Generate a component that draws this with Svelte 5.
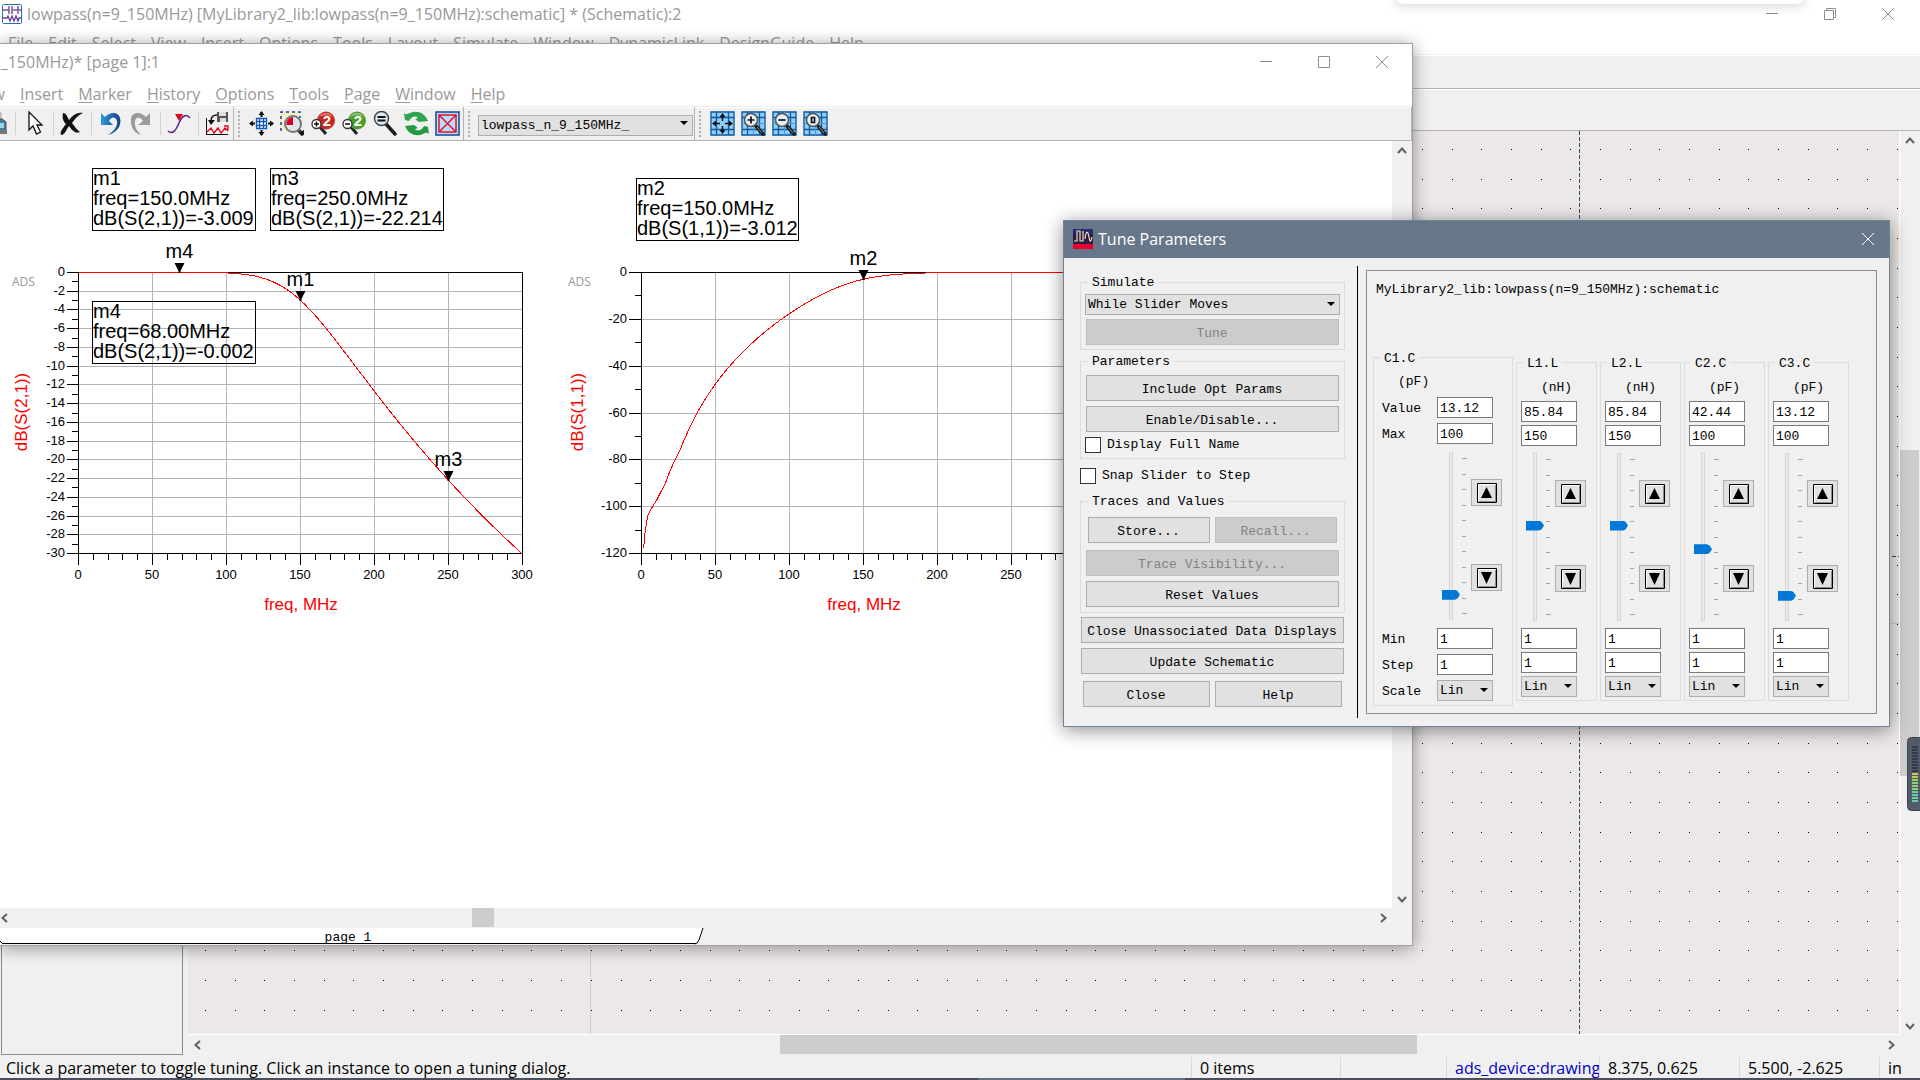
<script lang="ts">
	interface Marker {
		name: string;
		freq: number;
		db: number;
	}
	interface Plot {
		left: number;
		labelX: number;
		titleX: number;
		adsX: number;
		tickX: number;
		minorX: number;
		min: number;
		major: number;
		minor: number;
		trace: string;
		points: [number, number][];
		markers: Marker[];
	}
	interface Param {
		name: string;
		unit: string;
		value: number;
		max: number;
	}

	const schematicMenus = [
		'File', 'Edit', 'Select', 'View', 'Insert', 'Options', 'Tools', 'Layout',
		'Simulate', 'Window', 'DynamicLink', 'DesignGuide', 'Help'
	];
	const displayMenus = ['Insert', 'Marker', 'History', 'Options', 'Tools', 'Page', 'Window', 'Help'];

	let params = $state<Param[]>([
		{ name: 'C1.C', unit: 'pF', value: 13.12, max: 100 },
		{ name: 'L1.L', unit: 'nH', value: 85.84, max: 150 },
		{ name: 'L2.L', unit: 'nH', value: 85.84, max: 150 },
		{ name: 'C2.C', unit: 'pF', value: 42.44, max: 100 },
		{ name: 'C3.C', unit: 'pF', value: 13.12, max: 100 }
	]);

	// Schematic grid, snapped to whole pixels so the dots stay crisp.
	const PITCH = 29.68;
	let dots = '';
	for (let r = 0; r < 60; r++) {
		for (let c = 0; c < 100; c++) {
			dots += `M${Math.round(17 + c * PITCH)} ${Math.round(18 + r * PITCH)}h1v1h-1z`;
		}
	}

	// Both plots share the vertical extent and a 0-300 MHz axis.
	const TOP = 131;
	const HEIGHT = 281;
	const WIDTH = 444;
	const CUTOFF = 150;

	const s21: [number, number][] = [];
	for (let f = 0; f <= 300; f += 2) {
		s21.push([f, -10 * Math.log10(1 + (f / CUTOFF) ** 10)]);
	}
	const s11: [number, number][] = [
		[1.5, -118], [2, -113], [3, -108.5], [4.2, -104], [6, -101.7], [8, -99.6],
		[10.2, -97.4], [13, -93.9], [16, -90.3], [18.6, -86], [22.3, -80.5]
	];
	for (let f = 26; f <= 300; f += 2) {
		s11.push([f, -10 * Math.log10(1 + (CUTOFF / f) ** 10)]);
	}

	const plots: Plot[] = [
		{
			left: 78, labelX: 65, titleX: 27, adsX: 12, tickX: 67, minorX: 72,
			min: -30, major: 2, minor: 1, trace: 'dB(S(2,1))', points: s21,
			markers: [
				{ name: 'm4', freq: 68, db: -0.002 },
				{ name: 'm1', freq: 150, db: -3.009 },
				{ name: 'm3', freq: 250, db: -22.214 }
			]
		},
		{
			left: 641, labelX: 627, titleX: 583, adsX: 568, tickX: 629, minorX: 635,
			min: -120, major: 20, minor: 10, trace: 'dB(S(1,1))', points: s11,
			markers: [{ name: 'm2', freq: 150, db: -3.012 }]
		}
	];

	const readouts = [
		{ x: 92, y: 27, w: 163, lines: ['m1', 'freq=150.0MHz', 'dB(S(2,1))=-3.009'] },
		{ x: 270, y: 27, w: 173, lines: ['m3', 'freq=250.0MHz', 'dB(S(2,1))=-22.214'] },
		{ x: 92, y: 160, w: 163, lines: ['m4', 'freq=68.00MHz', 'dB(S(2,1))=-0.002'] },
		{ x: 636, y: 37, w: 162, lines: ['m2', 'freq=150.0MHz', 'dB(S(1,1))=-3.012'] }
	];

	const px = (p: Plot, f: number) => p.left + (f / 300) * WIDTH;
	const py = (p: Plot, db: number) => TOP + (db / p.min) * HEIGHT;
	const snap = (n: number) => Math.round(n) + 0.5;
	const range = (end: number, step: number) =>
		Array.from({ length: Math.round(end / step) + 1 }, (_, i) => i * step);
	const tracePath = (p: Plot) =>
		p.points.map(([f, d]) => `${(px(p, f) + 0.5).toFixed(1)},${(py(p, d) + 0.2).toFixed(1)}`).join(' ');

	function nudge(p: Param, by: number) {
		p.value = Math.min(p.max, Math.max(1, +(p.value + by).toFixed(2)));
	}
</script>

{#snippet chevron(dir: string)}
	<svg class="chev {dir}" viewBox="0 0 10 10" width="10" height="10">
		<path d="M1 7 5 2.500 9 7" fill="none" stroke="#606060" stroke-width="2" />
	</svg>
{/snippet}

{#snippet scrollbar(dir: string, start: number, size: number)}
	<div class="scroll {dir}">
		<button type="button" aria-label="Scroll back">{@render chevron(dir === 'v' ? 'up' : 'left')}</button>
		<div class="track">
			{#if size > 0}
				<div
					class="thumb"
					style={dir === 'v' ? `top:${start}%;height:${size}%` : `left:${start}%;width:${size}%`}
				></div>
			{/if}
		</div>
		<button type="button" aria-label="Scroll forward">{@render chevron(dir === 'v' ? 'down' : 'right')}</button>
	</div>
{/snippet}

{#snippet lens()}
	<path d="m15 15 7 8" stroke="#1c1c1c" stroke-width="3.500" stroke-linecap="round" />
	<path d="m16 16 5 6" stroke="#888" stroke-width="1" />
{/snippet}

{#snippet gridTile()}
	<rect x=".5" y=".5" width="24" height="24" fill="#8ecdf7" />
	<path d="M1 1h23v23H1zM6.500 1v23M18.500 1v23M1 6.500h23M1 18.500h23" fill="none" stroke="#12589f" stroke-width="1.300" />
	<path d="M12.500 1v23M1 12.500h23" fill="none" stroke="#4d97d3" />
{/snippet}

<div class="desktop">
	<header class="title">
		<svg class="appicon" viewBox="0 0 20 20" width="20" height="20">
			<rect x=".5" y=".5" width="19" height="19" rx="1" fill="#fff" stroke="#2b6cb5" />
			<path d="M1 6h6M7 2v8M10 2v8M10 6h9M16 2v8" fill="none" stroke="#7d5a9e" stroke-width="1.500" />
			<path d="M1 14h4l1-2 2 5 2-5 2 5 2-5 2 5 1-3h2" fill="none" stroke="#6a3d98" stroke-width="1.300" />
		</svg>
		<span>lowpass(n=9_150MHz) [MyLibrary2_lib:lowpass(n=9_150MHz):schematic] * (Schematic):2</span>
		<div class="sysbtns">
			<button type="button" aria-label="Minimize">
				<svg viewBox="0 0 12 12" width="12" height="12"><path d="M0 5.500h12" /></svg>
			</button>
			<button type="button" aria-label="Restore">
				<svg viewBox="0 0 12 12" width="12" height="12"><path d="M.5 2.500h9v9h-9zM2.500 2.500v-2h9v9h-2" /></svg>
			</button>
			<button type="button" aria-label="Close">
				<svg viewBox="0 0 12 12" width="12" height="12"><path d="m0 0 12 12M12 0 0 12" /></svg>
			</button>
		</div>
	</header>
	<nav class="menubar main" aria-label="Schematic menu">
		{#each schematicMenus as m}
			<button type="button">{m}</button>
		{/each}
	</nav>
	<div class="strip first"></div>
	<div class="strip second"></div>

	<main class="body">
		<div class="side"><div class="panel"></div></div>
		<div class="schematic">
			<svg class="sheet" aria-hidden="true">
				<path d="M402.500 0v2000M0 492.500h4000" stroke="#cfcfd1" />
				<path d={dots} fill="#000" />
				<path d="M1391.500 0v2000M0 425.500h4000" stroke="#2f4f4f" stroke-dasharray="4 2" />
			</svg>
			{@render scrollbar('v', 34.6, 37.7)}
			{@render scrollbar('h', 34.2, 38.1)}
		</div>
	</main>

	<footer class="status">
		<span class="msg">Click a parameter to toggle tuning. Click an instance to open a tuning dialog.</span>
		<span class="cell items">0 items</span>
		<span class="cell blank"></span>
		<span class="cell layer">ads_device:drawing</span>
		<span class="cell pos">8.375, 0.625</span>
		<span class="cell pos">5.500, -2.625</span>
		<span class="cell unit">in</span>
	</footer>
	<div class="taskbar"></div>

	<div class="flyout"></div>
	<svg class="meter" viewBox="0 0 13 74" width="13" height="74" aria-hidden="true">
		<rect x=".5" y=".5" width="18" height="73" rx="4" fill="#535b6b" stroke="#3d4350" />
		{#each range(18, 1) as i}
			<rect
				x="5" y={9 + i * 3} width="6" height="2"
				fill={i < 9 ? '#343946' : i < 11 ? '#c9c94f' : i < 15 ? '#92d06c' : '#66cfa6'}
			/>
		{/each}
	</svg>

	<section class="window" aria-label="Data display">
		<header class="wtitle">
			<span class="wname"><span>9_150MHz)* [page 1]:1</span></span>
			<div class="sysbtns">
				<button type="button" aria-label="Minimize">
					<svg viewBox="0 0 12 12" width="12" height="12"><path d="M0 5.500h12" /></svg>
				</button>
				<button type="button" aria-label="Maximize">
					<svg viewBox="0 0 12 12" width="12" height="12"><path d="M.5.5h11v11H.5z" /></svg>
				</button>
				<button type="button" aria-label="Close">
					<svg viewBox="0 0 12 12" width="12" height="12"><path d="m0 0 12 12M12 0 0 12" /></svg>
				</button>
			</div>
		</header>
		<nav class="menubar" aria-label="Display menu">
			<button type="button" class="cut">w</button>
			{#each displayMenus as m}
				<button type="button"><u>{m[0]}</u>{m.slice(1)}</button>
			{/each}
		</nav>

		<div class="toolbar">
			<div class="group">
				<button type="button" class="half" aria-label="Print">
					<svg viewBox="16 0 9 25" width="9" height="25">
						<path d="M10 2h7v9h-7z" fill="#e8eef4" stroke="#999" />
						<path d="M8 8h10l4 3v10H8z" fill="#3f7fa6" stroke="#444" />
						<path d="M14 12h6v5h-6z" fill="#9fd0ea" /><path d="M14 19h9v4h-9z" fill="#777" />
					</svg>
				</button>
				<i class="sep"></i>
				<button type="button" aria-label="Select">
					<svg viewBox="0 0 25 25"><path d="M7 1v18l4-4 3.500 8 4-2-3.500-7h5z" fill="#fff" stroke="#111" stroke-width="1.300" /></svg>
				</button>
				<i class="sep"></i>
				<button type="button" aria-label="Delete">
					<svg viewBox="0 0 25 25"><path d="M3 2c3 0 4 3 6 7 4-5 8-8 14-7-5 2-8 6-11 10 3 4 5 7 8 9-5 2-8-2-11-6-3 4-3 7-7 9-3-1-1-5 4-11-3-3-4-6-3-11z" fill="#111" /></svg>
				</button>
				<i class="sep"></i>
				<button type="button" aria-label="Undo">
					<svg viewBox="0 0 25 25">
						<defs><linearGradient id="blue" x1="0" x2="1"><stop offset="0" stop-color="#2b9be0" /><stop offset="1" stop-color="#173f88" /></linearGradient></defs>
						<path d="M3 2v12h12l-4-4c3-5 7-4 8 0 1 5-3 10-9 14 9-2 14-10 12-17C20 0 12 1 7 6z" fill="url(#blue)" />
					</svg>
				</button>
				<button type="button" aria-label="Redo">
					<svg viewBox="0 0 25 25"><path d="M21 2v12H9l5-4c-4-5-7-4-8 0-1 5 2 10 6 14C4 22 1 14 2 7 4 0 12 1 17 6z" fill="#9b9b9b" /></svg>
				</button>
				<i class="sep"></i>
				<button type="button" aria-label="Insert marker">
					<svg viewBox="0 0 25 25">
						<path d="M1 20c5 4 8-1 11-8S19 2 23 7" fill="none" stroke="#5c2382" stroke-width="1.500" />
						<path d="M8 3h8l-4 7z" fill="#e3001f" />
					</svg>
				</button>
				<i class="sep"></i>
				<button type="button" aria-label="Save trace">
					<svg viewBox="0 0 25 25">
						<path d="M1.500 7v17M1 23.500h22" fill="none" stroke="#111" />
						<path d="m2 21 4-4 3 5 4-5 3 5 4-5 3 3M19 15h4v4" fill="none" stroke="#e3001f" stroke-width="1.300" />
						<rect x="12" y="1" width="11" height="10" fill="#555" /><path d="M14 1h7v4h-7zM15 7h6v4h-6z" fill="#ddd" />
						<path d="M12 4C8 4 6 6 6 10" fill="none" stroke="#111" stroke-width="1.500" /><path d="M3 9h7l-4 5z" fill="#111" />
					</svg>
				</button>
			</div>
			<div class="group">
				<i class="grip"></i>
				<button type="button" aria-label="View all">
					<svg viewBox="0 0 25 25">
						<path d="M12.500 1v23M1 12.500h23" stroke="#111" stroke-width="2" />
						<path d="m12.500 0 3 4h-6zm0 25 3-4h-6zM0 12.500l4-3v6zm25 0-4-3v6z" fill="#111" />
						<rect x="6" y="6" width="13" height="13" fill="#efefef" />
						<path d="M7.500 7.500h10v10h-10zM10.500 7v11M14.500 7v11M7 10.500h11M7 14.500h11" fill="#fff" stroke="#1158b8" stroke-width="1.300" />
					</svg>
				</button>
				<button type="button" aria-label="Zoom area">
					<svg viewBox="0 0 25 25">
						<rect x="1" y="1" width="19" height="19" fill="#eef3c8" />
						<path d="M1 20V1h19v6" fill="none" stroke="#1b3c9a" stroke-width="1.500" stroke-dasharray="3 3" />
						{@render lens()}
						<circle cx="13" cy="13" r="8" fill="#dfe5ec" stroke="#777" stroke-width="2" />
						<path d="M13 6v8H6.500c-.5-4 2-8 6.500-8z" fill="#e3001f" /><path d="m19 22 5 2v-5z" fill="#111" />
					</svg>
				</button>
				{#each ['#c8281e', '#4d9e2d'] as tint, i}
					<button type="button" aria-label={i === 0 ? 'Zoom in by 2' : 'Zoom out by 2'}>
						<svg viewBox="0 0 25 25">
							<path d="m9 16 6 7" stroke="#222" stroke-width="3" />
							<circle cx="15" cy="9.500" r="9" fill={tint} />
							<path d="M7.500 6c4-6 11-5 15 0-4-2-11-2-15 0z" fill="#fff" opacity=".35" />
							<text x="16" y="15" class="two" text-anchor="middle">2</text>
							<circle cx="5.500" cy="13" r="4.500" fill="#fff" stroke="#333" stroke-width="1.300" />
							<path d={i === 0 ? 'M3 13h5M5.500 10.500v5' : 'M3 13h5'} stroke="#111" stroke-width="1.500" />
						</svg>
					</button>
				{/each}
				<button type="button" aria-label="Actual size">
					<svg viewBox="0 0 25 25">
						<path d="m13 13 9 10" stroke="#1c1c1c" stroke-width="3.500" stroke-linecap="round" />
						<circle cx="8.500" cy="7.500" r="7" fill="#dceaf5" stroke="#444" stroke-width="1.500" />
						<path d="M4.500 6h8M4.500 9.500h8" stroke="#111" stroke-width="2" />
					</svg>
				</button>
				<button type="button" aria-label="Refresh">
					<svg viewBox="0 0 25 25">
						<path d="M0 2c2 2 3 1 6 0 7-3 14 0 17 6l1 2-9 1-4-3 3-1C11 4 7 6 5 10L1 9z" fill="#2fa34f" />
						<path d="M25 23c-2-2-3-1-6 0-7 3-14 0-17-6l-1-2 9-1 4 3-3 1c3 3 7 1 9-3l4 1z" fill="#249a44" />
					</svg>
				</button>
				<button type="button" aria-label="Clear">
					<svg viewBox="0 0 25 25">
						<rect x="1" y="1" width="23" height="23" fill="#b5dcf8" stroke="#0f4a94" stroke-width="1.500" />
						<path d="M4 4h17v17H4zl17 17M21 4 4 21" fill="none" stroke="#e8112d" stroke-width="1.500" />
					</svg>
				</button>
			</div>
			<div class="group">
				<i class="grip"></i>
				<span class="combo dataset">
					<select aria-label="Dataset"><option>lowpass_n_9_150MHz_</option></select>
				</span>
			</div>
			<div class="group last">
				<i class="grip"></i>
				<button type="button" aria-label="Autoscale">
					<svg viewBox="0 0 25 25">
						{@render gridTile()}
						<path d="M12.500 4v17M4 12.500h17" stroke="#111" stroke-width="1.500" />
						<path d="m12.500 2 3 4h-6zm0 21 3-4h-6zM2 12.500l4-3v6zm21 0-4-3v6z" fill="#111" />
						<rect x="10" y="10" width="5" height="5" fill="#8ecdf7" />
					</svg>
				</button>
				{#each ['M6.500 9h7M10 5.500v7', 'M6.500 9h7', 'M8.500 6.500h3v5h-3z'] as mark, i}
					<button type="button" aria-label={['Zoom in plot', 'Zoom out plot', 'Reset plot'][i]}>
						<svg viewBox="0 0 25 25">
							{@render gridTile()}
							{@render lens()}
							<circle cx="10" cy="9" r="6.500" fill="#e4eff7" stroke="#555" stroke-width="1.500" />
							<path d={mark} fill="none" stroke="#111" stroke-width="1.700" />
						</svg>
					</button>
				{/each}
			</div>
		</div>

		<div class="page">
			<div class="paper">
				<svg class="plots" width="1392" height="767">
					{#each plots as p}
						<g class="crisp">
							{#each range(250, 50).slice(1) as f}
								<path class="grid" d="M{snap(px(p, f))} {TOP}v{HEIGHT}" />
							{/each}
							{#each range(-p.min, p.major).slice(1, -1) as d}
								<path class="grid" d="M{p.left} {snap(py(p, -d))}h{WIDTH}" />
							{/each}
							{#each range(300, 10) as f}
								<path class="axis" d="M{snap(px(p, f))} {TOP + HEIGHT}v{f % 50 ? 7 : 12}" />
							{/each}
							{#each range(-p.min, p.minor) as d}
								<path class="axis" d="M{d % p.major ? p.minorX : p.tickX} {snap(py(p, -d))}H{p.left}" />
							{/each}
							<rect class="axis" x={p.left + 0.5} y={TOP + 0.5} width={WIDTH} height={HEIGHT} />
							<polyline class="trace" points={tracePath(p)} />
						</g>
						{#each range(-p.min, p.major) as d}
							<text class="tick" x={p.labelX} y={Math.round(py(p, -d)) + 4} text-anchor="end">{d ? -d : 0}</text>
						{/each}
						{#each range(300, 50) as f}
							<text class="tick" x={px(p, f)} y="438" text-anchor="middle">{f}</text>
						{/each}
						<text class="ads" x={p.adsX} y="145">ADS</text>
						<text class="label" transform="translate({p.titleX} 271) rotate(-90)" text-anchor="middle">{p.trace}</text>
						<text class="label" x={p.left + 1 + WIDTH / 2} y="469" text-anchor="middle">freq, MHz</text>
						{#each p.markers as m}
							{@const x = Math.round(px(p, m.freq)) + 0.5}
							{@const y = Math.round(py(p, m.db)) + 1}
							<path d="M{x - 5} {y - 10}h10l-4 8v2h-2v-2z" fill="#000" />
							<text class="mark" {x} y={y - 15} text-anchor="middle">{m.name}</text>
						{/each}
					{/each}
					{#each readouts as r}
						<rect class="axis" x={r.x + 0.5} y={r.y + 0.5} width={r.w} height="62" />
						{#each r.lines as line, i}
							<text class="mark" x={r.x + 1} y={r.y + 17 + i * 20}>{line}</text>
						{/each}
					{/each}
				</svg>
			</div>
			{@render scrollbar('v', 0, 0)}
		</div>
		<div class="hscroll">{@render scrollbar('h', 33.7, 1.6)}</div>
		<div class="tabs">
			<button type="button" class="tab">
				<svg viewBox="0 0 704 17" width="704" height="17" aria-hidden="true">
					<path d="M0 0h703l-4 12q-1 4-5 4H4q-2-1-4-3z" fill="#fff" />
					<path d="M703 0l-4 12q-1 4-5 4M0 13l3 3M3 15.500h692" fill="none" stroke="#000" />
				</svg>
				<span>page 1</span>
			</button>
		</div>
	</section>

	<section class="dialog" role="dialog" aria-label="Tune Parameters">
		<header class="dtitle">
			<svg viewBox="0 0 20 20" width="20" height="20">
				<rect width="20" height="15" fill="#2c1c40" /><path d="M0 0h20v5H0z" fill="#27307a" opacity=".8" />
				<rect y="15" width="20" height="5" fill="#e9002a" />
				<path d="M1 12h3V2h3v10h3V2M12 10c1-9 3-8 4-2s2 5 3 0" fill="none" stroke="#f5dcc0" stroke-width="1.200" />
			</svg>
			<span>Tune Parameters</span>
			<button type="button" aria-label="Close">
				<svg viewBox="0 0 12 12" width="12" height="12"><path d="m0 0 12 12M12 0 0 12" stroke="#fff" /></svg>
			</button>
		</header>
		<div class="dbody">
			<div class="controls">
				<fieldset class="simulate">
					<legend>Simulate</legend>
					<span class="combo wide">
						<select aria-label="Simulate mode"><option>While Slider Moves</option></select>
					</span>
					<button type="button" class="btn" disabled>Tune</button>
				</fieldset>
				<fieldset class="parameters">
					<legend>Parameters</legend>
					<button type="button" class="btn">Include Opt Params</button>
					<button type="button" class="btn">Enable/Disable...</button>
					<label class="check"><input type="checkbox" />Display Full Name</label>
				</fieldset>
				<label class="check snap"><input type="checkbox" />Snap Slider to Step</label>
				<fieldset class="traces">
					<legend>Traces and Values</legend>
					<div class="pair">
						<button type="button" class="btn">Store...</button>
						<button type="button" class="btn" disabled>Recall...</button>
					</div>
					<button type="button" class="btn" disabled>Trace Visibility...</button>
					<button type="button" class="btn">Reset Values</button>
				</fieldset>
				<div class="actions">
					<button type="button" class="btn">Close Unassociated Data Displays</button>
					<button type="button" class="btn">Update Schematic</button>
					<div class="pair">
						<button type="button" class="btn">Close</button>
						<button type="button" class="btn">Help</button>
					</div>
				</div>
			</div>
			<div class="rule"></div>
			<div class="frame">
				<p>MyLibrary2_lib:lowpass(n=9_150MHz):schematic</p>
				<div class="params">
					{#each params as p, i}
						<fieldset class="param" class:labelled={i === 0}>
							<legend>{p.name}</legend>
							<div class="punit">({p.unit})</div>
							<div class="row">
								<label for="value{i}">Value</label>
								<input id="value{i}" type="text" bind:value={p.value} />
							</div>
							<div class="row">
								<label for="max{i}">Max</label>
								<input id="max{i}" type="text" bind:value={p.max} />
							</div>
							<div class="slider">
								<input type="range" min="1" max={p.max} step="any" bind:value={p.value} aria-label="{p.name} slider" />
								<svg viewBox="0 0 5 168" width="5" height="168" aria-hidden="true">
									{#each range(10, 1) as t}
										<path d="M0 {6.5 + Math.round(t * 15.5)}h{t % 10 ? 4 : 5}" stroke="#a8a392" />
									{/each}
								</svg>
								<div class="steps">
									<button type="button" aria-label="Increase {p.name}" onclick={() => nudge(p, 1)}>
										<svg viewBox="0 0 20 20" width="20" height="20">
											<path class="edge" d="M.5.5h19v19H.5z" /><path class="hi" d="M1.500 18V1.500H18" /><path class="lo" d="M2 18.500h16.500V2" />
											<path d="M9.500 4 15 15H4z" />
										</svg>
									</button>
									<button type="button" aria-label="Decrease {p.name}" onclick={() => nudge(p, -1)}>
										<svg viewBox="0 0 20 20" width="20" height="20">
											<path class="edge" d="M.5.5h19v19H.5z" /><path class="hi" d="M1.500 18V1.500H18" /><path class="lo" d="M2 18.500h16.500V2" />
											<path d="M9.500 16 15 4H4z" />
										</svg>
									</button>
								</div>
							</div>
							<div class="row">
								<label for="min{i}">Min</label>
								<input id="min{i}" type="text" value="1" />
							</div>
							<div class="row">
								<label for="step{i}">Step</label>
								<input id="step{i}" type="text" value="1" />
							</div>
							<div class="row">
								<label for="scale{i}">Scale</label>
								<span class="combo"><select id="scale{i}"><option>Lin</option><option>Log</option></select></span>
							</div>
						</fieldset>
					{/each}
				</div>
			</div>
		</div>
	</section>
</div>

<style>
	:global(body) {
		margin: 0;
		overflow: hidden;
	}
	.desktop {
		--ui: 'Open Sans', 'Noto Sans', sans-serif;
		--mono: 'Liberation Mono', 'Noto Sans CJK SC', monospace;
		--face: #f0f0f0;
		--edge: #b4b4b4;
		position: relative;
		display: flex;
		flex-direction: column;
		height: 100vh;
		overflow: hidden;
		background: var(--face);
		font: 16px/20px var(--ui);
		color: #000;
	}
	.desktop * {
		box-sizing: border-box;
	}
	button {
		margin: 0;
		padding: 0;
		border: 0;
		background: none;
		font: inherit;
		color: inherit;
	}

	/* schematic window */
	.title {
		display: flex;
		align-items: center;
		height: 30px;
		padding: 0 0 2px 2px;
		background: #fff;
		color: #999;
		white-space: nowrap;
	}
	.appicon {
		margin-right: 5px;
	}
	.sysbtns {
		display: flex;
		margin-left: auto;
	}
	.sysbtns button {
		display: grid;
		place-items: center;
		width: 58px;
		height: 28px;
	}
	.sysbtns path {
		fill: none;
		stroke: #8f8f8f;
	}
	.title .sysbtns {
		padding-right: 3px;
	}
	.window .sysbtns {
		padding-right: 1px;
	}
	.menubar {
		display: flex;
		align-items: center;
		gap: 15px;
		height: 26px;
		padding-top: 2px;
		background: #fff;
		color: #999;
	}
	.menubar.main {
		height: 24px;
		padding-left: 8px;
	}
	.menubar .cut {
		width: 5px;
		direction: rtl;
		overflow: hidden;
	}
	.menubar u {
		text-underline-offset: 2px;
	}
	.strip {
		border-bottom: 1px solid var(--edge);
		box-shadow: inset 0 1px #fff;
	}
	.first {
		height: 35px;
		border-top: 1px solid #f0f0f0;
	}
	.second {
		height: 42px;
	}
	.body {
		display: flex;
		flex: 1;
		min-height: 0;
	}
	.side {
		display: flex;
		width: 188px;
		padding: 0 5px 2px 1px;
	}
	.panel {
		flex: 1;
		border: 1px solid #868b94;
	}
	.schematic {
		display: grid;
		grid-template: 1fr 22px / 1fr 20px;
		flex: 1;
		min-width: 0;
	}
	.sheet {
		width: 100%;
		height: 100%;
		min-height: 0;
		border: solid #fff;
		border-width: 0 1px 1px 0;
		background: #ece8e7;
		overflow: hidden;
	}
	.scroll {
		display: flex;
		background: var(--face);
	}
	.scroll.v {
		flex-direction: column;
		width: 20px;
	}
	.scroll.h {
		height: 20px;
	}
	.scroll button {
		display: grid;
		place-items: center;
		width: 19px;
		height: 19px;
	}
	.track {
		position: relative;
		flex: 1;
	}
	.thumb {
		position: absolute;
		background: #cdcdcd;
	}
	.v .thumb {
		left: 0;
		width: 19px;
	}
	.h .thumb {
		top: 0;
		height: 19px;
	}
	.down {
		transform: rotate(180deg);
	}
	.left {
		transform: rotate(-90deg);
	}
	.right {
		transform: rotate(90deg);
	}
	.status {
		display: flex;
		height: 21px;
		line-height: 22px;
		white-space: nowrap;
	}
	.msg {
		flex: 1;
		padding-left: 6px;
	}
	.cell {
		padding-left: 8px;
		border-left: 1px solid #d9d9d9;
	}
	.items {
		width: 149px;
	}
	.blank {
		width: 106px;
	}
	.layer {
		width: 153px;
		color: #0000c8;
	}
	.pos {
		width: 140px;
	}
	.unit {
		width: 41px;
	}
	.taskbar {
		height: 2px;
		background: linear-gradient(90deg, #4a4d5c 978px, #5f6f82 978px 1185px, #4a4d5c 1185px);
	}
	.flyout {
		position: absolute;
		top: -16px;
		right: 114px;
		width: 412px;
		height: 20px;
		border-radius: 10px;
		background: #fff;
		box-shadow: 0 2px 12px rgb(0 0 0 / 0.16);
	}
	.meter {
		position: absolute;
		top: 737px;
		right: 0;
	}

	/* data display window */
	.window {
		position: absolute;
		inset: 43px 507px 134px 0;
		display: flex;
		flex-direction: column;
		border: 1px solid #a0a0a0;
		border-left: 0;
		background: var(--face);
		box-shadow: 0 2px 16px rgb(0 0 0 / 0.4);
	}
	.wtitle {
		display: flex;
		align-items: center;
		height: 36px;
		background: #fff;
		color: #999;
	}
	.wname {
		display: flex;
		justify-content: flex-end;
		width: 160px;
		overflow: hidden;
		white-space: nowrap;
	}
	.toolbar {
		display: flex;
		height: 35px;
		border-top: 1px solid #eaeaea;
		border-bottom: 1px solid var(--edge);
		box-shadow: inset 0 1px #fff;
	}
	.group {
		display: flex;
		align-items: center;
		gap: 6px;
		padding-right: 3px;
		border-right: 1px solid var(--edge);
	}
	.group.last {
		flex: 1;
	}
	.group button,
	.group button svg {
		display: block;
		width: 25px;
		height: 25px;
	}
	.group .half,
	.group .half svg {
		width: 9px;
	}
	.sep {
		width: 1px;
		height: 23px;
		background: #d2d2d2;
	}
	.grip {
		width: 2px;
		height: 26px;
		margin: 0 3px 0 4px;
		background: repeating-linear-gradient(#b0b0b0 0 2px, transparent 2px 4px);
	}
	.two {
		font: bold 15px 'Liberation Sans', sans-serif;
		fill: #fff;
	}
	.combo {
		position: relative;
		display: block;
		height: 21px;
	}
	.combo::after {
		content: '';
		position: absolute;
		top: 8px;
		right: 5px;
		border: solid transparent;
		border-width: 4px 4px 0;
		border-top-color: #000;
		pointer-events: none;
	}
	select {
		appearance: none;
		width: 100%;
		height: 100%;
		padding: 1px 2px 0;
		border: 1px solid #adadad;
		border-radius: 0;
		background: #e1e1e1;
		font: 13px/18px var(--mono);
		color: #000;
	}
	.dataset {
		width: 215px;
		margin: 0 -2px 0 -1px;
	}
	.page {
		display: flex;
		flex: 1;
		min-height: 0;
	}
	.paper {
		flex: 1;
		min-width: 0;
		background: #fff;
		overflow: hidden;
	}
	.plots {
		display: block;
		font-family: 'Liberation Sans', Arial, sans-serif;
	}
	.crisp {
		shape-rendering: crispEdges;
	}
	.grid {
		stroke: #b4b4b4;
	}
	.axis {
		fill: none;
		stroke: #000;
	}
	.trace {
		fill: none;
		stroke: #f00;
	}
	.tick {
		font-size: 13px;
	}
	.ads {
		font: 12px var(--ui);
		fill: #999;
	}
	.label {
		font-size: 17px;
		fill: #f00;
	}
	.mark {
		font-size: 20px;
	}
	.hscroll {
		padding-right: 20px;
		margin-left: -5px;
	}
	.tabs {
		height: 17px;
	}
	.tab {
		position: relative;
		display: block;
		width: 696px;
		height: 17px;
		font: 13px/20px var(--mono);
	}
	.tab svg {
		position: absolute;
		top: 0;
		left: 0;
	}
	.tab span {
		position: relative;
	}

	/* tuning dialog */
	.dialog {
		position: absolute;
		top: 220px;
		right: 30px;
		width: 827px;
		border: 1px solid #71819a;
		background: var(--face);
		box-shadow: 0 3px 18px rgb(0 0 0 / 0.45);
		font: 13px/18px var(--mono);
	}
	.dtitle {
		display: flex;
		align-items: center;
		gap: 5px;
		height: 37px;
		padding: 0 15px 1px 9px;
		background: #687689;
		color: #fff;
		font: 16px/20px var(--ui);
	}
	.dtitle button {
		display: grid;
		margin-left: auto;
	}
	.dbody {
		display: flex;
	}
	.controls {
		width: 293px;
		padding: 16px 12px 19px 16px;
	}
	fieldset {
		display: flex;
		flex-direction: column;
		min-width: 0;
		margin: 0;
		padding: 0 5px 5px;
		border: 1px solid #dcdcdc;
	}
	legend {
		height: 16px;
		margin-left: 2px;
		padding: 0 4px;
	}
	.simulate {
		gap: 4px;
		padding: 4px 5px 4px;
	}
	.parameters {
		gap: 5px;
		margin-top: 3px;
		padding-top: 6px;
	}
	.traces {
		gap: 5px;
		margin-top: 9px;
		padding-top: 8px;
	}
	.wide {
		margin: 0 -1px;
	}
	.btn {
		display: block;
		width: 100%;
		height: 26px;
		padding: 3px 1px 0 0;
		border: 1px solid #adadad;
		background: #e1e1e1;
		white-space: nowrap;
	}
	.btn:disabled {
		border-color: #bfbfbf;
		background: #ccc;
		color: #838383;
	}
	.check {
		display: flex;
		align-items: center;
		gap: 6px;
		height: 16px;
		margin-left: -1px;
		line-height: 20px;
	}
	.check input {
		appearance: none;
		width: 16px;
		height: 16px;
		margin: 0;
		border: 1px solid #333;
		background: #fff;
	}
	.snap {
		margin: 9px 0 0;
	}
	.pair {
		display: flex;
		gap: 5px;
		margin: 0 2px 2px;
	}
	.actions {
		display: flex;
		flex-direction: column;
		gap: 5px;
		margin: 4px 1px 0;
	}
	.actions .pair {
		margin: 2px 2px 0;
	}
	.rule {
		width: 1px;
		margin: 8px 0;
		background: #000;
	}
	.frame {
		flex: 1;
		margin: 12px 12px 12px 8px;
		border: 1px solid #868b94;
	}
	.frame p {
		height: 16px;
		margin: 10px 9px 52px;
	}
	.params {
		display: flex;
		align-items: center;
		gap: 3px;
		padding-left: 6px;
	}
	.param {
		--gap: 3px;
		--block: 7px;
		width: 81px;
		padding: 9px 4px 3px;
	}
	.param.labelled {
		--gap: 5px;
		--block: 8px;
		width: 140px;
		padding: 8px 8px 4px;
	}
	.param legend {
		line-height: 20px;
	}
	.labelled legend {
		margin-left: -2px;
	}
	.punit {
		height: 16px;
		margin-bottom: 6px;
		text-align: center;
	}
	.labelled .punit {
		margin-bottom: 8px;
		padding-left: 16px;
		text-align: left;
	}
	.row {
		display: flex;
		align-items: center;
		height: 21px;
	}
	.row + .row {
		margin-top: var(--gap);
	}
	.row label {
		display: none;
	}
	.labelled label {
		display: block;
		width: 55px;
		padding-top: 2px;
	}
	.row input,
	.row .combo {
		width: 56px;
		height: 21px;
	}
	.row input {
		padding: 2px 2px 0;
		border: 1px solid #7a7a7a;
		background: #fff;
		font: 13px/17px var(--mono);
	}
	.slider {
		display: flex;
		height: 168px;
		margin: var(--block) 0 var(--block) 5px;
	}
	.labelled .slider {
		margin-left: 60px;
	}
	.slider > svg {
		margin: 0 4px 0 2px;
	}
	.slider input {
		appearance: none;
		writing-mode: vertical-lr;
		direction: rtl;
		width: 18px;
		height: 168px;
		margin: 0;
		padding-bottom: 1px;
		background: linear-gradient(#e7eaea, #e7eaea) 8px 1px / 2px 166px no-repeat,
			linear-gradient(#d6d6d6, #d6d6d6) 7px 0 / 4px 168px no-repeat;
	}
	.slider input::-webkit-slider-thumb {
		appearance: none;
		width: 18px;
		height: 10px;
		background: #0078d7;
		clip-path: polygon(0 0, 72% 0, 86% 12%, 100% 50%, 86% 88%, 72% 100%, 0 100%);
	}
	.steps {
		display: flex;
		flex-direction: column;
		gap: 58px;
		padding-top: 27px;
	}
	.steps button {
		display: grid;
		place-items: center;
		width: 31px;
		height: 27px;
		border: 1px solid #adadad;
		background: #e1e1e1;
	}
	.edge {
		fill: #e1e1e1;
		stroke: #000;
	}
	.hi {
		fill: none;
		stroke: #fff;
	}
	.lo {
		fill: none;
		stroke: #8a8a8a;
	}
</style>
